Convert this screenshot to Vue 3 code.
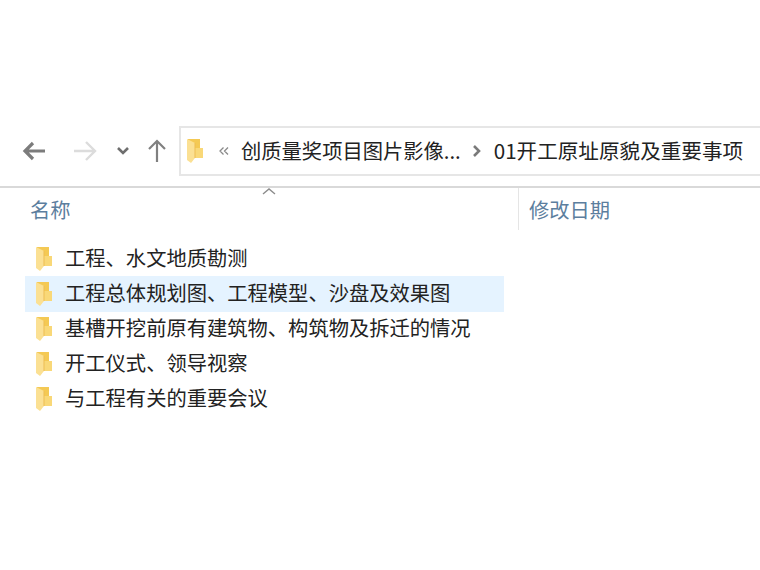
<template>
  <div class="explorer">
    <div class="toolbar">
      <div class="nav">
        <svg class="nav-back" width="26" height="22" viewBox="0 0 26 22"><path d="M24 11H4M12 3l-8 8 8 8" fill="none" stroke="#7c7c7c" stroke-width="3.200"/></svg>
        <svg class="nav-forward" width="26" height="22" viewBox="0 0 26 22"><path d="M2 11h21M14 2l9 9-9 9" fill="none" stroke="#dcdcdc" stroke-width="2.400"/></svg>
        <svg class="nav-down" width="14" height="10" viewBox="0 0 14 10"><path d="M2 2l5 5 5-5" fill="none" stroke="#6e6e6e" stroke-width="2.600"/></svg>
        <svg class="nav-up" width="20" height="24" viewBox="0 0 20 24"><path d="M10 23V2M2 10l8-8 8 8" fill="none" stroke="#808080" stroke-width="2.200"/></svg>
      </div>
      <div class="address">
        <svg class="folder" width="16" height="24" viewBox="0 0 16 24">
          <path d="M1 0h12v18H1z" fill="#f4c954"/>
          <path d="M8 9h8v10H8z" fill="#f9d878"/>
          <path d="M0 0l8 4v15l-4 5-4-3z" fill="#fbe093"/>
          <path d="M8 4v15" stroke="#edbd52" stroke-width="1"/>
        </svg>
        <svg class="chevrons" width="10" height="10" viewBox="0 0 10 10"><path d="M4.500 1.500 1 5l3.500 3.500M9 1.500 5.500 5 9 8.500" fill="none" stroke="#8a8a8a" stroke-width="1.300"/></svg>
        <span class="crumb first">创质量奖项目图片影像...</span>
        <svg class="sep" width="10" height="14" viewBox="0 0 10 14"><path d="M2 2l5 5-5 5" fill="none" stroke="#7a7a7a" stroke-width="2.600"/></svg>
        <span class="crumb last">01开工原址原貌及重要事项</span>
      </div>
    </div>

    <div class="head">
      <svg class="sort" width="14" height="7" viewBox="0 0 14 7"><path d="M1 6l6-5 6 5" fill="none" stroke="#8c8c8c" stroke-width="1.400"/></svg>
      <div class="col-name">名称</div>
      <div class="col-date">修改日期</div>
    </div>

    <ul class="list">
      <li v-for="(row, i) in rows" :key="row" class="row" :class="{ active: i === 1 }">
        <svg class="folder" width="16" height="24" viewBox="0 0 16 24">
          <path d="M1 0h12v18H1z" fill="#f4c954"/>
          <path d="M8 9h8v10H8z" fill="#f9d878"/>
          <path d="M0 0l8 4v15l-4 5-4-3z" fill="#fbe093"/>
          <path d="M8 4v15" stroke="#edbd52" stroke-width="1"/>
        </svg>
        <span class="label">{{ row }}</span>
      </li>
    </ul>
  </div>
</template>

<script setup>
const rows = [
  '工程、水文地质勘测',
  '工程总体规划图、工程模型、沙盘及效果图',
  '基槽开挖前原有建筑物、构筑物及拆迁的情况',
  '开工仪式、领导视察',
  '与工程有关的重要会议',
];
</script>

<style>
html,
body {
  background: #fff;
}
</style>

<style scoped>
.explorer {
  width: 760px;
  height: 570px;
  overflow: hidden;
  padding-top: 126px;
  box-sizing: border-box;
  background: #fff;
  font-family: "Noto Sans CJK SC", "Noto Sans", sans-serif;
}

.toolbar {
  display: flex;
  align-items: center;
  height: 50px;
  padding-left: 21px;
}

.nav {
  display: flex;
  align-items: center;
  width: 158px;
  flex: none;
}

.nav-forward {
  margin-left: 25px;
}

.nav-down {
  margin-left: 18px;
}

.nav-up {
  margin-left: 17px;
}

.address {
  flex: none;
  width: 600px;
  height: 50px;
  box-sizing: border-box;
  border: 2px solid #e6e6e6;
  border-right: none;
  display: flex;
  align-items: center;
  padding-left: 6px;
  color: #222;
  font-size: 20.3px;
  white-space: nowrap;
}

.chevrons {
  margin-left: 16px;
}

.crumb {
  padding-bottom: 3px;
}

.crumb.first {
  margin-left: 12px;
}

.crumb.last {
  font-size: 20.6px;
}

.sep {
  margin: 0 12px 0 11px;
}

.head {
  position: relative;
  display: flex;
  margin-top: 10px;
  height: 42px;
  border-top: 2px solid #d9d9d9;
  color: #5c7e9e;
  font-size: 20.3px;
  line-height: 42px;
}

.sort {
  position: absolute;
  left: 262px;
  top: 0;
}

.col-name {
  width: 519px;
  padding-left: 30px;
  box-sizing: border-box;
  border-right: 1px solid #e5e5e5;
}

.col-date {
  padding-left: 10px;
}

.list {
  list-style: none;
  margin: 11px 0 0 25px;
  padding: 0;
  width: 479px;
}

.row {
  display: flex;
  align-items: center;
  height: 35px;
  padding-left: 11px;
  color: #222;
  font-size: 20.3px;
  white-space: nowrap;
}

.row.active {
  background: #e5f3ff;
  box-shadow: 0 1px 0 #e5f3ff;
}

.label {
  margin-left: 13px;
  padding-bottom: 3px;
}
</style>
